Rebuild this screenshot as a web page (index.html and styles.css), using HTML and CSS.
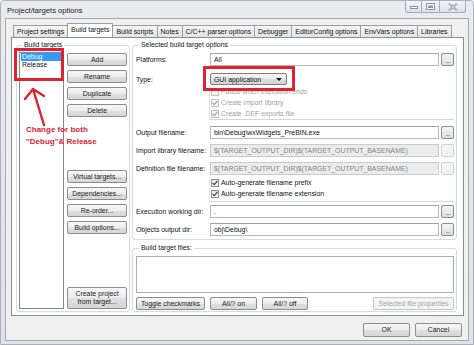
FILE: index.html
```html
<!DOCTYPE html>
<html>
<head>
	<meta charset="utf-8">
	<title>Project/targets options</title>
	<link rel="stylesheet" href="styles.css">
</head>
<body>
<div class="win">
	<div class="titlebar">
		<span class="title">Project/targets options</span>
		<div class="capbtns">
			<span class="cap cap-min"><svg width="8" height="4" viewBox="0 0 8 4"><rect x="0.5" y="1.5" width="7" height="2" fill="#fff" stroke="#8a939d"/></svg></span>
			<span class="cap cap-max"><svg width="9" height="7" viewBox="0 0 9 7"><rect x="0.5" y="0.5" width="8" height="6" fill="#fff" stroke="#8a939d"/><rect x="2" y="2.5" width="5" height="2.5" fill="#8a939d"/></svg></span>
			<span class="cap cap-close"><svg width="10" height="8" viewBox="0 0 10 8"><path d="M1 0.5 L9 7.5 M9 0.5 L1 7.5" stroke="#8a939d" stroke-width="2"/><path d="M1 0.5 L9 7.5 M9 0.5 L1 7.5" stroke="#fff" stroke-width="0.6"/></svg></span>
		</div>
	</div>
	<div class="client">
		<div class="tabs">
			<span class="tab">Project settings</span>
			<span class="tab sel">Build targets</span>
			<span class="tab">Build scripts</span>
			<span class="tab">Notes</span>
			<span class="tab">C/C++ parser options</span>
			<span class="tab">Debugger</span>
			<span class="tab">EditorConfig options</span>
			<span class="tab">EnvVars options</span>
			<span class="tab last">Libraries</span>
		</div>
		<div class="panel">
			<fieldset class="grp grp-targets">
				<legend>Build targets</legend>
				<div class="targets">
					<div class="listbox">
						<div class="item sel">Debug</div>
						<div class="item">Release</div>
					</div>
					<div class="btncol">
						<span class="btn">Add</span>
						<span class="btn">Rename</span>
						<span class="btn">Duplicate</span>
						<span class="btn">Delete</span>
						<span class="btn gap-big">Virtual targets...</span>
						<span class="btn">Dependencies...</span>
						<span class="btn">Re-order...</span>
						<span class="btn">Build options...</span>
						<span class="btn tall">Create project<br>from target...</span>
					</div>
				</div>
			</fieldset>
			<div class="rightcol">
				<fieldset class="grp grp-opts">
					<legend>Selected build target options</legend>
					<div class="row">
						<span class="lbl">Platforms:</span>
						<span class="field">All</span>
						<span class="dots">...</span>
					</div>
					<div class="row row-type">
						<span class="lbl">Type:</span>
						<span class="combo">GUI application<i class="arrow"></i></span>
					</div>
					<div class="checks checks-a">
						<div class="chkrow off"><span class="chk"></span>Pause when execution ends</div>
						<div class="chkrow off"><span class="chk"><svg width="6" height="6" viewBox="0 0 6 6"><path d="M0.6 3 L2.3 4.7 L5.4 1" fill="none" stroke="#a8a8a8" stroke-width="1.2"/></svg></span>Create import library</div>
						<div class="chkrow off"><span class="chk"><svg width="6" height="6" viewBox="0 0 6 6"><path d="M0.6 3 L2.3 4.7 L5.4 1" fill="none" stroke="#a8a8a8" stroke-width="1.2"/></svg></span>Create .DEF exports file</div>
					</div>
					<div class="row row-out">
						<span class="lbl">Output filename:</span>
						<span class="field">bin\Debug\wxWidgets_PreBIN.exe</span>
						<span class="dots">...</span>
					</div>
					<div class="row row-gap">
						<span class="lbl">Import library filename:</span>
						<span class="field off">$(TARGET_OUTPUT_DIR)$(TARGET_OUTPUT_BASENAME)</span>
						<span class="dots off">...</span>
					</div>
					<div class="row row-gap">
						<span class="lbl">Definition file filename:</span>
						<span class="field off">$(TARGET_OUTPUT_DIR)$(TARGET_OUTPUT_BASENAME)</span>
						<span class="dots off">...</span>
					</div>
					<div class="checks checks-b">
						<div class="chkrow"><span class="chk"><svg width="6" height="6" viewBox="0 0 6 6"><path d="M0.6 3 L2.3 4.7 L5.4 1" fill="none" stroke="#3d4f7c" stroke-width="1.2"/></svg></span>Auto-generate filename prefix</div>
						<div class="chkrow"><span class="chk"><svg width="6" height="6" viewBox="0 0 6 6"><path d="M0.6 3 L2.3 4.7 L5.4 1" fill="none" stroke="#3d4f7c" stroke-width="1.2"/></svg></span>Auto-generate filename extension</div>
					</div>
					<div class="row row-exec">
						<span class="lbl">Execution working dir:</span>
						<span class="field">.</span>
						<span class="dots">...</span>
					</div>
					<div class="row row-gap">
						<span class="lbl">Objects output dir:</span>
						<span class="field">obj\Debug\</span>
						<span class="dots">...</span>
					</div>
				</fieldset>
				<fieldset class="grp grp-files">
					<legend>Build target files:</legend>
					<div class="fileslist"></div>
					<div class="filebtns">
						<span class="btn b-toggle">Toggle checkmarks</span>
						<span class="btn b-on">All/? on</span>
						<span class="btn b-off">All/? off</span>
						<span class="btn b-props off">Selected file properties</span>
					</div>
				</fieldset>
			</div>
		</div>
		<div class="footer">
			<span class="btn b-ok">OK</span>
			<span class="btn b-ok">Cancel</span>
		</div>
	</div>

	<!-- red notes drawn over the dialog -->
	<div class="mark mark-list"></div>
	<div class="mark mark-type"></div>
	<svg class="note-arrow" width="30" height="42" viewBox="0 0 30 42"><path d="M4 13 L12 3 L23 10 M12 3 L23 39" fill="none" stroke="#dd2330" stroke-width="2.4" stroke-linecap="round" stroke-linejoin="round"/></svg>
	<div class="note">Change for both<br>"Debug"&amp; Release</div>
</div>
</body>
</html>
```

FILE: styles.css
```css
*{margin: 0;padding: 0;box-sizing: border-box;}
html,body{width: 474px;height: 345px;overflow: hidden;background: #fff;}
body{font-family: "Liberation Sans", Arial, sans-serif;font-size: 6.9px;color: #111;}

.win{position: relative;width: 474px;height: 345px;display: flex;flex-direction: column;padding: 0 4px 3px 4px;background: linear-gradient(#e9ecef, #dfe3e8);border: 1px solid #a9b0b8;border-radius: 4px 4px 0 0;}
.titlebar{height: 17px;display: flex;justify-content: space-between;align-items: flex-start;}
.title{padding: 5px 0 0 2px;line-height: 9px;font-size: 7.6px;color: #1a1a1a;}
.capbtns{display: flex;margin-right: 3px;}
.cap{height: 12px;display: flex;align-items: center;justify-content: center;border: 1px solid #a3acb6;border-top: none;background: linear-gradient(#f3f5f7, #dde2e7);}
.cap-min{width: 17px;border-radius: 0 0 0 3px;align-items: flex-end;padding-bottom: 3px;}
.cap-max{width: 18px;border-left: none;}
.cap-close{width: 26px;border-left: none;border-radius: 0 0 3px 0;}

.client{flex: 1;display: flex;flex-direction: column;padding: 4px 4px 0 5px;background: #f0f0f0;border: 1px solid #a3a9b0;}
.tabs{display: flex;align-items: flex-end;height: 15px;padding-left: 2px;margin-bottom: -1px;}
.tab{height: 12px;margin-bottom: 1px;padding: 0 3px;line-height: 11px;white-space: nowrap;border: 1px solid #9a9da6;border-right: none;border-bottom: none;background: linear-gradient(#f5f5f5, #e4e4e4);}
.tab.last{border-right: 1px solid #9a9da6;}
.tab.sel{height: 15px;margin-bottom: 0;line-height: 12px;background: #fff;border-right: 1px solid #9a9da6;}
.tab.sel + .tab{border-left: none;}

.panel{height: 279px;display: flex;gap: 2px;padding: 3px 6px 3px 4px;background: #fff;border: 1px solid #898c95;}

.grp{border: 1px solid #d5dbe0;border-radius: 3px;min-width: 0;}
.grp legend{margin-left: 3px;padding: 0 2px;line-height: 8px;height: 8px;}
.grp-targets{width: 116px;height: 271px;padding: 3px 2px 2px 2px;}
.targets{display: flex;}
.listbox{width: 46px;height: 257px;border: 1px solid #828790;padding: 0 1px;background: #fff;}
.item{height: 8px;line-height: 8px;padding-left: 1px;white-space: nowrap;}
.item.sel{background: #3399ff;color: #fff;width: 41px;}
.btncol{width: 61px;margin-left: 3px;padding-top: 1px;display: flex;flex-direction: column;gap: 4px;}

.btn{height: 13px;display: flex;align-items: center;justify-content: center;text-align: center;line-height: 8px;white-space: nowrap;color: #1a1a1a;border: 1px solid #8d8d8d;border-radius: 2px;background: linear-gradient(#f7f7f7 0%, #ececec 50%, #e0e0e0 51%, #d6d6d6 100%);}
.btn.gap-big{margin-top: 49px;}
.btn.tall{height: 22px;margin-top: auto;}
.btn.off{color: #a4a4a4;border-color: #c4c6c8;background: #f4f4f4;}

.rightcol{width: 325px;display: flex;flex-direction: column;gap: 4px;}
.grp-opts{height: 199px;padding: 4px 2px 2px 3px;}
.row{display: grid;grid-template-columns: 74px 229px 15px;align-items: center;height: 13px;}
.row-type{margin-top: 7px;height: 12px;}
.row-out{margin-top: 6px;}
.row-gap{margin-top: 5px;}
.row-exec{margin-top: 3px;}
.lbl{white-space: nowrap;}
.field{height: 13px;padding-left: 3px;line-height: 11px;white-space: nowrap;overflow: hidden;background: #fff;border: 1px solid #b5b8bf;border-top-color: #9ea2aa;}
.field.off{background: #ececec;color: #858585;border-color: #c8cacd;}
.dots{justify-self: end;width: 13px;height: 13px;display: flex;justify-content: center;align-items: center;padding-top: 2px;font-size: 6px;letter-spacing: -0.5px;border: 1px solid #8d8d8d;border-radius: 2px;background: linear-gradient(#f7f7f7, #dcdcdc);}
.dots.off{color: #b5b5b5;border-color: #cfd1d3;background: #f4f4f4;}
.combo{width: 77px;height: 12px;display: flex;align-items: center;justify-content: space-between;padding: 0 4px 0 3px;white-space: nowrap;border: 1px solid #7e7e7e;border-radius: 2px;background: linear-gradient(#f6f6f6 0%, #ebebeb 50%, #dedede 51%, #d4d4d4 100%);}
.arrow{width: 0;height: 0;border-left: 3px solid transparent;border-right: 3px solid transparent;border-top: 3px solid #111;}

.checks{margin-left: 73px;width: 245px;border-left: 1px solid #e2e2e2;border-bottom: 1px solid #d6d6d6;}
.checks-a{margin-top: 1px;}
.checks-b{margin-top: 2px;padding-bottom: 2px;}
.chkrow{height: 11px;display: flex;align-items: center;padding-left: 1px;white-space: nowrap;}
.chkrow.off{color: #a2a2a2;}
.chk{width: 8px;height: 8px;margin-right: 2px;display: flex;align-items: center;justify-content: center;border: 1px solid #8e8f8f;background: linear-gradient(#e4e4e4, #fbfbfb);}
.chkrow.off .chk{border-color: #c3c3c3;background: #f6f6f6;}

.grp-files{height: 68px;padding: 4px 2px 2px 3px;}
.fileslist{height: 37px;border: 1px solid #a9acb2;background: #fff;}
.filebtns{display: flex;gap: 5px;margin-top: 4px;}
.b-toggle{width: 69px;}
.b-on{width: 47px;}
.b-off{width: 46px;}
.b-props{width: 81px;margin-left: auto;}

.footer{display: flex;justify-content: flex-end;gap: 5px;margin-top: 7px;padding-right: 2px;}
.b-ok{width: 47px;height: 14px;}

.mark{position: absolute;border: 3px solid #df2230;}
.mark-list{left: 13px;top: 47px;width: 50px;height: 33px;}
.mark-type{left: 202px;top: 65px;width: 92px;height: 25px;}
.note-arrow{position: absolute;left: 20px;top: 85px;}
.note{position: absolute;left: 25px;top: 123px;font-weight: bold;font-size: 8px;line-height: 11.5px;color: #dd2330;white-space: nowrap;}
```
